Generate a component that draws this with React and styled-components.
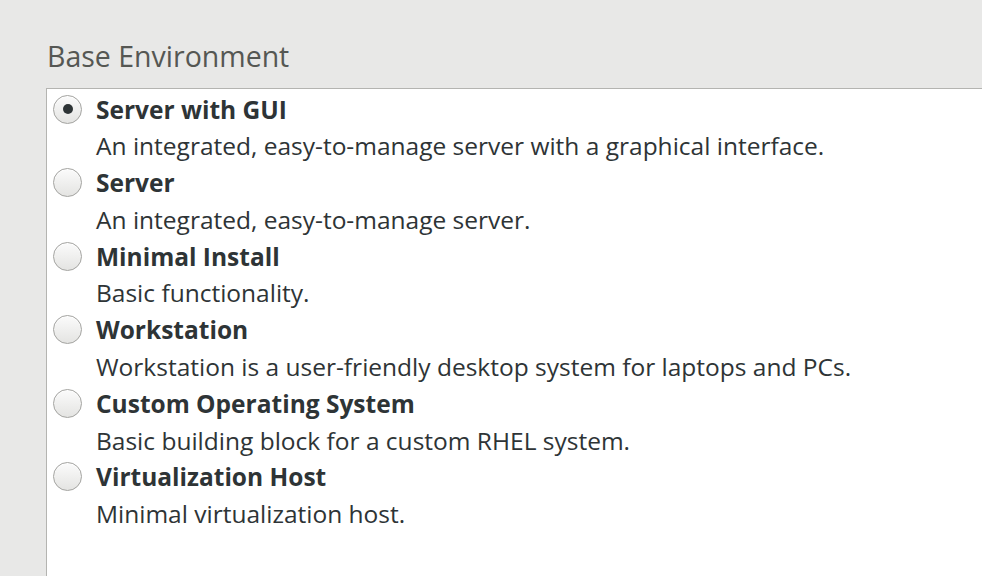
import React, { useState } from "react";
import styled, { createGlobalStyle } from "styled-components";

const Global = createGlobalStyle`
  html, body {
    margin: 0;
    padding: 0;
    background: #e8e8e7;
    overflow: hidden;
  }
`;

const Page = styled.div`
  width: 982px;
  height: 576px;
  padding: 36px 0 0 46px;
  box-sizing: border-box;
  display: flex;
  flex-direction: column;
  font-family: "Open Sans", "Noto Sans", sans-serif;
`;

const Heading = styled.div`
  font-size: 28.5px;
  color: #555753;
  height: 52px;
  line-height: 40px;
  padding-left: 1px;
`;

const ListBox = styled.div`
  flex: 1;
  background: #ffffff;
  border: 1px solid #b4b4b1;
  border-right: none;
  border-bottom: none;
  padding: 2px 0 0 6px;
  display: flex;
  flex-direction: column;
`;

const Option = styled.label`
  display: grid;
  grid-template-columns: 43px auto;
  grid-template-rows: 36px 37.6px;
  align-items: center;
  cursor: pointer;
`;

const Radio = styled.span`
  width: 29px;
  height: 29px;
  border-radius: 50%;
  box-sizing: border-box;
  border: 1px solid #a3a3a0;
  background: linear-gradient(#fbfbfb, #e4e4e2);
  box-shadow: inset 0 1px 0 #ffffff;
  display: flex;
  align-items: center;
  justify-content: center;
  &::after {
    content: "";
    width: 10px;
    height: 10px;
    border-radius: 50%;
    background: #2e3436;
    display: ${(p) => (p.checked ? "block" : "none")};
  }
`;

const Title = styled.div`
  font-size: 24.5px;
  font-weight: 700;
  color: #2e3436;
  white-space: nowrap;
`;

const Desc = styled.div`
  grid-column: 2;
  font-size: 24.5px;
  color: #2e3436;
  white-space: nowrap;
`;

const envs = [
  ["Server with GUI", "An integrated, easy-to-manage server with a graphical interface."],
  ["Server", "An integrated, easy-to-manage server."],
  ["Minimal Install", "Basic functionality."],
  ["Workstation", "Workstation is a user-friendly desktop system for laptops and PCs."],
  ["Custom Operating System", "Basic building block for a custom RHEL system."],
  ["Virtualization Host", "Minimal virtualization host."],
];

export default function App() {
  const [selected, setSelected] = useState(0);
  return (
    <>
      <Global />
      <Page>
        <Heading>Base Environment</Heading>
        <ListBox>
          {envs.map(([name, desc], i) => (
            <Option key={name} onClick={() => setSelected(i)}>
              <Radio checked={selected === i} />
              <Title>{name}</Title>
              <Desc>{desc}</Desc>
            </Option>
          ))}
        </ListBox>
      </Page>
    </>
  );
}
